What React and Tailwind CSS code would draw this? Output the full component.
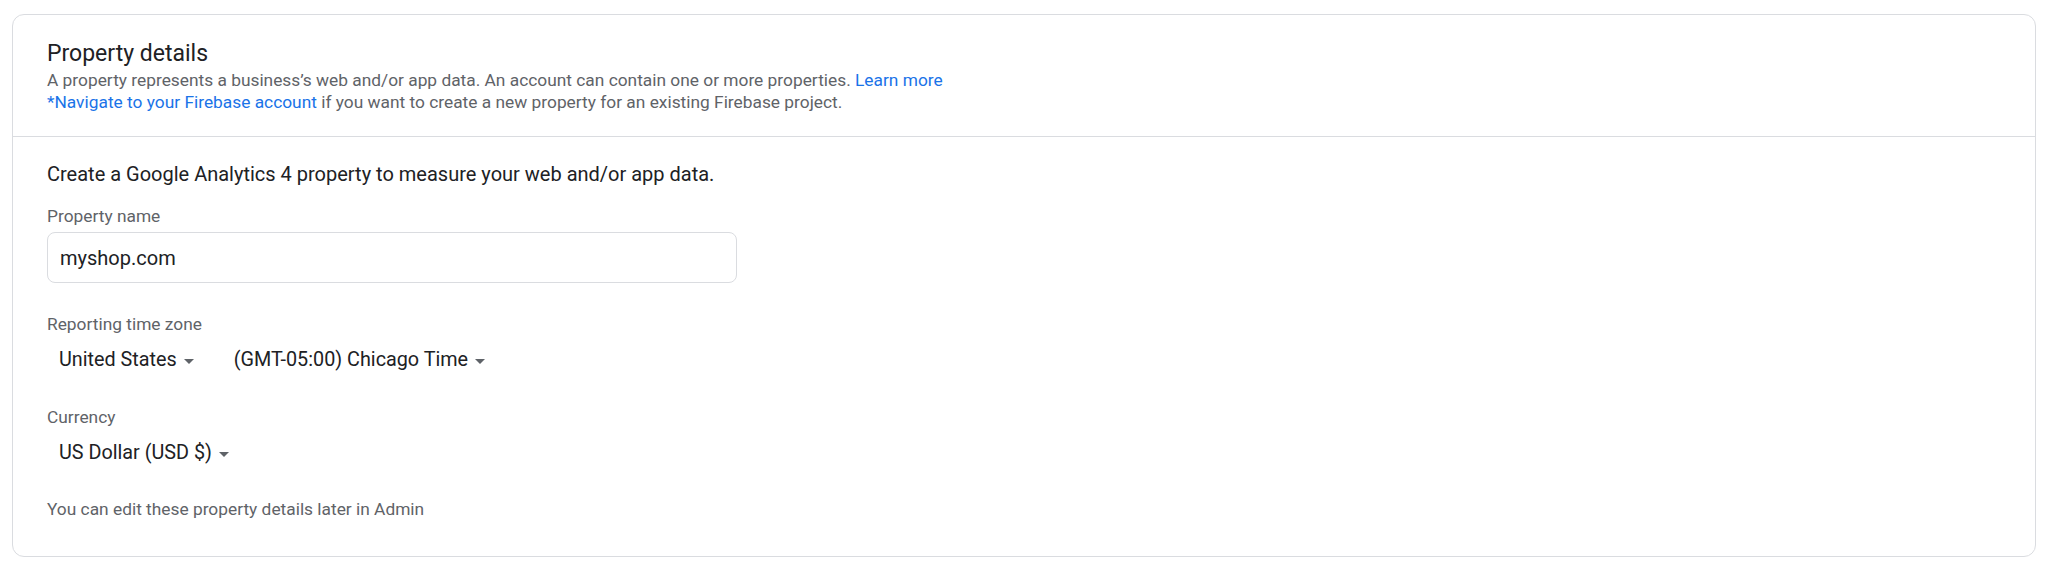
import React from 'react';

function Caret() {
  return (
    <svg width="10" height="5" viewBox="0 0 10 5" className="ml-[7px] mt-[2px] shrink-0">
      <path d="M0 0 L10 0 L5 5 Z" fill="#5f6368" />
    </svg>
  );
}

function Dropdown({ label }) {
  return (
    <button className="flex items-center h-[24px] pl-[12px] pr-[12px] text-[19.8px] leading-[24px] text-[#202124]">
      <span>{label}</span>
      <Caret />
    </button>
  );
}

export default function App() {
  return (
    <div className="bg-white min-h-[568px] pt-[14px] px-[12px]" style={{ fontFamily: 'Roboto, "Noto Sans", sans-serif' }}>
      <div className="border border-[#dadce0] rounded-[12px] bg-white">
        <div className="border-b border-[#dadce0] pl-[34px] pt-[24px] pb-[23px]">
          <h2 className="text-[23px] leading-[30px] text-[#202124] font-normal">Property details</h2>
          <p className="text-[17.33px] leading-[22px] text-[#5f6368]">
            A property represents a business’s web and/or app data. An account can contain one or more properties.{' '}
            <a className="text-[#1a73e8]">Learn more</a>
          </p>
          <p className="text-[17.33px] leading-[22px] text-[#5f6368]">
            <a className="text-[#1a73e8]">*Navigate to your Firebase account</a> if you want to create a new property for an existing Firebase project.
          </p>
        </div>

        <div className="pl-[34px] pt-[25px] pb-[37px]">
          <p className="text-[20px] leading-[24px] text-[#202124]">
            Create a Google Analytics 4 property to measure your web and/or app data.
          </p>

          <div className="mt-[20px] text-[17.33px] leading-[20px] text-[#5f6368]">Property name</div>
          <div className="mt-[6px] w-[690px] h-[51px] border border-[#dadce0] rounded-[8px] flex items-center pl-[12px]">
            <span className="text-[20px] leading-[24px] text-[#202124] pt-[1px]">myshop.com</span>
          </div>

          <div className="mt-[31px] text-[17.33px] leading-[20px] text-[#5f6368]">Reporting time zone</div>
          <div className="mt-[14px] flex gap-[16px]">
            <Dropdown label="United States" />
            <Dropdown label="(GMT-05:00) Chicago Time" />
          </div>

          <div className="mt-[35px] text-[17.33px] leading-[20px] text-[#5f6368]">Currency</div>
          <div className="mt-[14px] flex">
            <Dropdown label="US Dollar (USD $)" />
          </div>

          <p className="mt-[34px] text-[17.33px] leading-[20px] text-[#5f6368]">You can edit these property details later in Admin</p>
        </div>
      </div>
    </div>
  );
}
